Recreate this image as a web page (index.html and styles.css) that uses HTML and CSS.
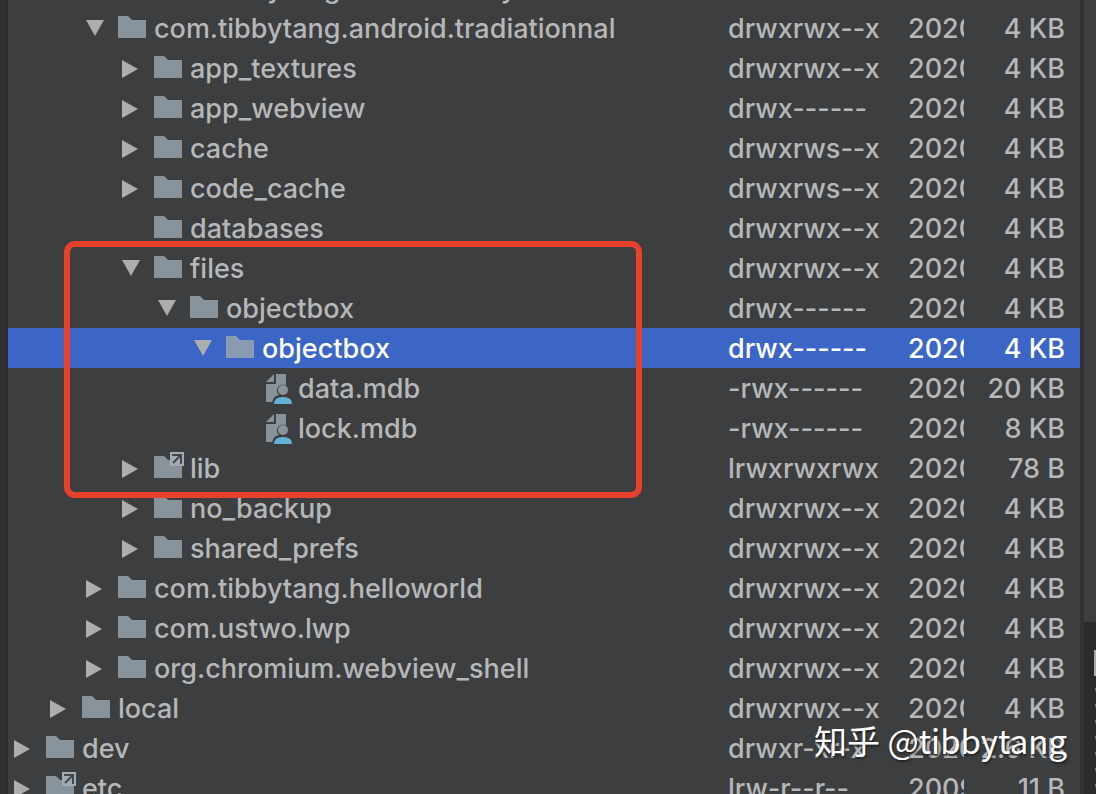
FILE: index.html
```
<!DOCTYPE html>
<html lang="en">
<head>
<meta charset="utf-8">
<title>Device File Explorer</title>
<link rel="stylesheet" href="styles.css">
</head>
<body>
<svg class="sprite" aria-hidden="true">
  <symbol id="open" viewBox="0 0 18 18"><path d="M0 0H18L9 16Z"/></symbol>
  <symbol id="closed" viewBox="0 0 18 18"><path d="M0 0L16 9L0 18Z"/></symbol>
  <symbol id="folder" viewBox="0 0 32 32"><path d="M0 4H9Q11 4 12 6L14 8H28V26H0Z"/></symbol>
  <symbol id="link" viewBox="0 0 32 32">
    <path d="M0 4H9Q11 4 12 6L14 8H28V26H0Z"/>
    <path class="badge" d="M16 0H30V14H16Z"/>
    <path class="badge-arrow" d="M19 11L26 4M18 3H27V12"/>
  </symbol>
  <symbol id="file" viewBox="0 0 32 32">
    <path d="M4 10L12 2V10ZM14 2H24V30H4V12H14Z"/>
    <path class="cut" d="M10 33Q10 24 17 23A6 6 0 1 1 25 23Q32 24 32 33Z"/>
    <circle cx="21" cy="18" r="5"/>
    <path class="person" d="M12 32Q12 25 21 25Q30 25 30 32Z"/>
  </symbol>
</svg>
<main class="window">
  <aside class="edge-left"></aside>
  <section class="explorer">
    <table class="tree">
      <colgroup><col><col class="col-perm"><col class="col-date"><col class="col-size"></colgroup>
      <tbody id="rows"></tbody>
    </table>
    <div class="highlight"></div>
  </section>
  <aside class="edge-right"><div class="edge-upper"></div><div class="edge-lower"><div class="edge-block"></div><div class="edge-dots"></div></div></aside>
  <p class="watermark">知乎 @tibbytang</p>
</main>
<script src="tree.js"></script>
</body>
</html>
```
FILE: tree.js
```
const entries = [
  [2, "closed", "folder", "com.tibbytang.android.easy", "drwxrwx--x", "2020-", "4 KB"],
  [2, "open", "folder", "com.tibbytang.android.tradiationnal", "drwxrwx--x", "2020-", "4 KB"],
  [3, "closed", "folder", "app_textures", "drwxrwx--x", "2020-", "4 KB"],
  [3, "closed", "folder", "app_webview", "drwx------", "2020-", "4 KB"],
  [3, "closed", "folder", "cache", "drwxrws--x", "2020-", "4 KB"],
  [3, "closed", "folder", "code_cache", "drwxrws--x", "2020-", "4 KB"],
  [3, "", "folder", "databases", "drwxrwx--x", "2020-", "4 KB"],
  [3, "open", "folder", "files", "drwxrwx--x", "2020-", "4 KB"],
  [4, "open", "folder", "objectbox", "drwx------", "2020-", "4 KB"],
  [5, "open", "folder", "objectbox", "drwx------", "2020-", "4 KB", true],
  [6, "", "file", "data.mdb", "-rwx------", "2020-", "20 KB"],
  [6, "", "file", "lock.mdb", "-rwx------", "2020-", "8 KB"],
  [3, "closed", "link", "lib", "lrwxrwxrwx", "2020-", "78 B"],
  [3, "closed", "folder", "no_backup", "drwxrwx--x", "2020-", "4 KB"],
  [3, "closed", "folder", "shared_prefs", "drwxrwx--x", "2020-", "4 KB"],
  [2, "closed", "folder", "com.tibbytang.helloworld", "drwxrwx--x", "2020-", "4 KB"],
  [2, "closed", "folder", "com.ustwo.lwp", "drwxrwx--x", "2020-", "4 KB"],
  [2, "closed", "folder", "org.chromium.webview_shell", "drwxrwx--x", "2020-", "4 KB"],
  [1, "closed", "folder", "local", "drwxrwx--x", "2020-", "4 KB"],
  [0, "closed", "folder", "dev", "drwxr-xr-x", "2020-", "2.6 KB"],
  [0, "closed", "link", "etc", "lrw-r--r--", "2009-", "11 B"]
];

document.getElementById("rows").innerHTML = entries.map(([depth, state, icon, name, perm, date, size, selected]) => `
  <tr class="row${selected ? " selected" : ""}">
    <td class="entry"><div class="name depth-${depth}">
      ${state
        ? `<button class="toggle" aria-label="Toggle ${name}" aria-expanded="${state === "open"}"><svg class="arrow"><use href="#${state}"/></svg></button>`
        : `<span class="toggle"></span>`}
      <svg class="icon"><use href="#${icon}"/></svg><span class="label">${name}</span>
    </div></td>
    <td>${perm}</td><td class="date">${date}</td><td class="size">${size}</td>
  </tr>`).join("");
```
FILE: styles.css
```
body {
  margin: 0;
  background: #3c3e40;
  color: #b6b7b8;
  font: 500 27px/38px Inter, "Noto Sans CJK SC", sans-serif;
}

.sprite {
  position: absolute;
  width: 0;
  height: 0;
}

.window {
  position: relative;
  display: flex;
  height: 100vh;
  overflow: hidden;
}

.edge-left {
  flex: none;
  width: 8px;
  background: linear-gradient(to right, #303030 5px, #2a2b2c 5px);
}

.explorer {
  position: relative;
  flex: 1;
  min-width: 0;
}

/* Scrolled so that the first row is mostly hidden. */
.tree {
  width: 100%;
  margin-top: -32px;
  table-layout: fixed;
  border-collapse: collapse;
}

.col-perm { width: 180px; }
.col-date { width: 56px; }
.col-size { width: 116px; }

td {
  padding: 2px 0 0;
  white-space: nowrap;
}

.entry { padding: 0; }

.date { overflow: hidden; }

.size {
  padding-right: 15px;
  text-align: right;
}

.selected {
  background: #3b66c5;
  color: #fff;
}

.name {
  display: flex;
  height: 40px;
  padding-left: 6px;
}

.label { padding-top: 2px; }

.depth-1 { padding-left: 42px; }
.depth-2 { padding-left: 78px; }
.depth-3 { padding-left: 114px; }
.depth-4 { padding-left: 150px; }
.depth-5 { padding-left: 186px; }
.depth-6 { padding-left: 222px; }

.toggle {
  display: flex;
  align-items: flex-start;
  flex: none;
  width: 32px;
  height: 40px;
  padding: 12px 0 0;
  border: 0;
  box-sizing: border-box;
  background: none;
}

.arrow {
  display: block;
  width: 18px;
  height: 18px;
  fill: #acadae;
}

.icon {
  flex: none;
  width: 32px;
  height: 32px;
  margin: 4px 4px 0 0;
  fill: #89939b;
}

.selected .icon { fill: #8b9bb2; }

.badge { fill: #a4acb2; }

.badge-arrow {
  fill: none;
  stroke: #414950;
  stroke-width: 2;
}

.cut { fill: #3c3e40; }
.person { fill: #62b0d8; }

.highlight {
  position: absolute;
  top: 241px;
  left: 56px;
  width: 578px;
  height: 257px;
  box-sizing: border-box;
  border: 6px solid #e8412b;
  border-radius: 11px;
}

.edge-right {
  display: flex;
  flex: none;
  flex-direction: column;
  width: 12px;
  border-left: 4px solid #313234;
}

.edge-upper { flex: 1; }

.edge-lower {
  display: flex;
  flex-direction: column;
  align-items: flex-end;
  gap: 12px;
  padding-top: 28px;
  background: #2b2b2c;
}

.edge-block {
  width: 2px;
  height: 26px;
  background: #a9aaab;
}

.edge-dots {
  width: 1px;
  height: 106px;
  background: repeating-linear-gradient(#6c6d6e 0 3px, transparent 3px 16px);
}

.watermark {
  position: absolute;
  right: 29px;
  bottom: 34px;
  margin: 0;
  color: #fff;
  font: 33px/40px "Noto Sans CJK SC", sans-serif;
  text-shadow: 1px 2px 2px #222;
}
```
